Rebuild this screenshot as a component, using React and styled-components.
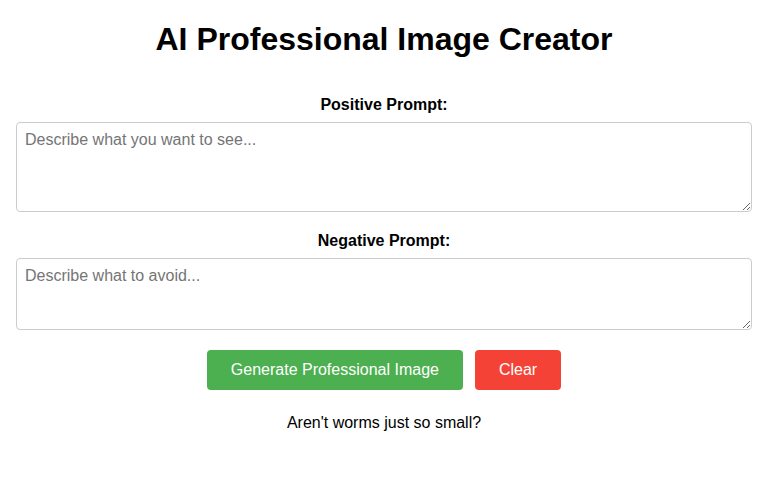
import React, { useState } from "react";
import styled, { createGlobalStyle } from "styled-components";

const GlobalStyle = createGlobalStyle`
  body {
    margin: 0;
    background: #fff;
    font-family: "Liberation Sans", Arial, sans-serif;
    color: #000;
  }
`;

const Page = styled.div`
  padding: 0 16px;
  display: flex;
  flex-direction: column;
  align-items: stretch;
`;

const Title = styled.h1`
  font-size: 32px;
  font-weight: bold;
  text-align: center;
  margin: 21px 0 38px;
  line-height: 37px;
`;

const Field = styled.div`
  display: flex;
  flex-direction: column;
  margin-top: ${(p) => p.$gap}px;
`;

const Label = styled.label`
  font-size: 16px;
  font-weight: bold;
  text-align: center;
  line-height: 18px;
  margin-bottom: 8px;
`;

const PromptBox = styled.textarea`
  box-sizing: border-box;
  width: 100%;
  height: ${(p) => p.$height}px;
  padding: 8px;
  border: 1px solid #ccc;
  border-radius: 4px;
  font-family: "Liberation Sans", Arial, sans-serif;
  font-size: 16px;
  line-height: 18px;
  resize: vertical;
  &::placeholder {
    color: #757575;
  }
`;

const ButtonRow = styled.div`
  display: flex;
  justify-content: center;
  gap: 12px;
  margin-top: 20px;
`;

const Button = styled.button`
  height: 40px;
  padding: 0 24px;
  border: none;
  border-radius: 4px;
  background: ${(p) => p.$color};
  color: #fff;
  font-family: "Liberation Sans", Arial, sans-serif;
  font-size: 16px;
  cursor: pointer;
`;

const Status = styled.p`
  text-align: center;
  font-size: 16px;
  line-height: 18px;
  margin: 24px 0 0;
`;

const App = () => {
  const [positive, setPositive] = useState("");
  const [negative, setNegative] = useState("");

  return (
    <>
      <GlobalStyle />
      <Page>
        <Title>AI Professional Image Creator</Title>
        <Field $gap={0}>
          <Label htmlFor="positive">Positive Prompt:</Label>
          <PromptBox
            id="positive"
            $height={90}
            placeholder="Describe what you want to see..."
            value={positive}
            onChange={(e) => setPositive(e.target.value)}
          />
        </Field>
        <Field $gap={20}>
          <Label htmlFor="negative">Negative Prompt:</Label>
          <PromptBox
            id="negative"
            $height={72}
            placeholder="Describe what to avoid..."
            value={negative}
            onChange={(e) => setNegative(e.target.value)}
          />
        </Field>
        <ButtonRow>
          <Button $color="#4caf50">Generate Professional Image</Button>
          <Button
            $color="#f44336"
            onClick={() => {
              setPositive("");
              setNegative("");
            }}
          >
            Clear
          </Button>
        </ButtonRow>
        <Status>Aren't worms just so small?</Status>
      </Page>
    </>
  );
};

export default App;
